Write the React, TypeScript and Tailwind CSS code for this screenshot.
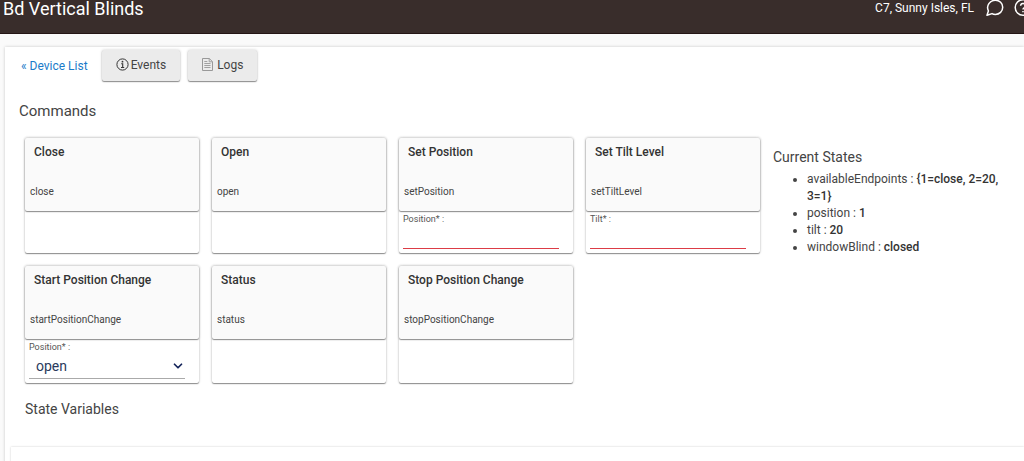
import React from 'react';
import { ChevronDown } from 'lucide-react';

type Field = { label: string; kind: 'number' | 'select'; options?: string[] };
type Command = { name: string; title: string; field?: Field };

const commands: Command[] = [
  { name: 'close', title: 'Close' },
  { name: 'open', title: 'Open' },
  { name: 'setPosition', title: 'Set Position', field: { label: 'Position* :', kind: 'number' } },
  { name: 'setTiltLevel', title: 'Set Tilt Level', field: { label: 'Tilt* :', kind: 'number' } },
  {
    name: 'startPositionChange',
    title: 'Start Position Change',
    field: { label: 'Position* :', kind: 'select', options: ['open', 'close'] },
  },
  { name: 'status', title: 'Status' },
  { name: 'stopPositionChange', title: 'Stop Position Change' },
];

const states = [
  { name: 'availableEndpoints', value: '{1=close, 2=20, 3=1}' },
  { name: 'position', value: '1' },
  { name: 'tilt', value: '20' },
  { name: 'windowBlind', value: 'closed' },
];

const raised = 'rounded-[2px] shadow-[0_1px_1px_rgba(0,0,0,0.4),0_0_3px_rgba(0,0,0,0.2)]';

function InfoIcon() {
  return (
    <svg className="size-[13px]" viewBox="0 0 13 13" fill="none" aria-hidden="true">
      <circle cx="6.5" cy="6.5" r="5.6" stroke="#333" strokeWidth="1" />
      <circle cx="6.5" cy="3.7" r="0.9" fill="#333" />
      <path d="M5.2 5.7h1.5v3.8M5 9.5h3.2" stroke="#333" strokeWidth="1.1" />
    </svg>
  );
}

function LogIcon() {
  return (
    <svg className="h-[13px] w-[11px]" viewBox="0 0 11 13" fill="none" stroke="#999" aria-hidden="true">
      <path d="M.5.5h6.8l3.2 3.2v8.8H.5z" />
      <path d="M7.2.5v3.3h3.3M2.3 3.5h3M2.3 5.5h6.2M2.3 7.5h6.2M2.3 9.5h6.2" strokeWidth="0.9" />
    </svg>
  );
}

function CommandField({ id, field }: { id: string; field: Field }) {
  return (
    <div className="pl-1 pr-3.5">
      <label htmlFor={id} className="block pt-0.5 text-[9px] leading-3 text-[#555]">
        {field.label}
      </label>
      {field.kind === 'number' ? (
        <input
          id={id}
          type="number"
          className="block h-6 w-full border-0 border-b border-solid border-b-[#dc3c46] bg-transparent px-2 text-sm outline-none"
        />
      ) : (
        <div className="relative">
          <select
            id={id}
            className="block h-[26px] w-full appearance-none border-b border-[#aaa] bg-transparent px-[7px] text-sm text-[#2a3a5c] outline-none"
          >
            {field.options?.map((option) => (
              <option key={option}>{option}</option>
            ))}
          </select>
          <ChevronDown
            className="pointer-events-none absolute right-0 top-1.5 size-3.5 text-[#14245a]"
            strokeWidth={3}
          />
        </div>
      )}
    </div>
  );
}

function CommandCard({ command }: { command: Command }) {
  return (
    <div className={`bg-white ${raised}`}>
      <button
        type="button"
        className={`flex h-[73px] w-full flex-col items-start bg-[#fafafa] px-1 pt-1.5 text-left ${raised}`}
      >
        <span className="px-[5px] text-xs font-medium leading-4 text-[#333]">{command.title}</span>
        <span className="mt-6 px-px text-[10px] leading-4 text-[#444]">{command.name}</span>
      </button>
      <div className="min-h-[42px] pb-1">
        {command.field && <CommandField id={`cmd-${command.name}`} field={command.field} />}
      </div>
    </div>
  );
}

export default function App() {
  return (
    <div className="min-h-screen overflow-hidden bg-[#fafafa] font-[Roboto,sans-serif] text-[#444]">
      <header className="flex h-[34px] items-start justify-between overflow-hidden border-b border-[#241515] bg-[#392d2b] pl-[3px] text-white">
        <h1 className="text-lg leading-[18px]">Bd Vertical Blinds</h1>
        <div className="flex items-start">
          <span className="text-xs leading-4">C7, Sunny Isles, FL</span>
          <a href="#chat" aria-label="Chat" className="ml-3">
            <svg className="size-[18px]" viewBox="0 0 18 18" fill="none" stroke="currentColor" strokeWidth="1.5" aria-hidden="true">
              <path d="M1 15.3l1.4-4.4C-.2 5.6 4 .3 9.4.3c4.2 0 7.3 3.1 7.3 6.9 0 4.2-3.2 7.2-7.3 7.2-1.3 0-2.4-.2-3.4-.8z" strokeLinejoin="round" />
            </svg>
          </a>
          <a href="#help" aria-label="Help" className="-mr-2 ml-2.5">
            <svg className="size-[18px]" viewBox="0 0 18 18" fill="none" stroke="currentColor" strokeWidth="1.5" aria-hidden="true">
              <circle cx="9" cy="7.5" r="7.8" />
              <path d="M6.6 5.8a2.4 2.4 0 1 1 3.4 2.2c-.7.4-1 .8-1 1.5M9 11v1.3" />
            </svg>
          </a>
        </div>
      </header>

      <main className="ml-[5px] mt-[13px] min-h-[414px] bg-white pl-5 pt-[3px] shadow-[0_0_3px_rgba(0,0,0,0.2)]">
        <nav className="-ml-1 flex items-center">
          <a href="#devices" className="mr-3.5 pt-px text-xs text-[#1a7bc9]">
            « Device List
          </a>
          <button type="button" className={`mr-2 flex h-[31px] items-center gap-0.5 bg-[#ebebeb] px-3.5 pb-0.5 text-xs ${raised}`}>
            <InfoIcon />
            Events
          </button>
          <button type="button" className={`flex h-[31px] items-center gap-1 bg-[#ebebeb] px-3.5 pb-0.5 text-xs ${raised}`}>
            <LogIcon />
            Logs
          </button>
        </nav>

        <h2 className="-ml-1.5 mt-5 text-[15px] leading-5">Commands</h2>

        <div className="mt-[17px] flex gap-[13px]">
          <section className="grid flex-1 grid-cols-4 gap-[13px]">
            {commands.map((command) => (
              <CommandCard key={command.name} command={command} />
            ))}
          </section>

          <aside className="w-[251px] pr-5 pt-[11px]">
            <h3 className="text-sm leading-4">Current States</h3>
            <ul className="mt-1.5 list-disc pl-[34px] text-xs leading-[17px]">
              {states.map((state) => (
                <li key={state.name}>
                  {state.name} : <span className="font-medium text-[#333]">{state.value}</span>
                </li>
              ))}
            </ul>
          </aside>
        </div>

        <h3 className="mt-4 text-sm leading-5">State Variables</h3>
        <div className="-ml-3.5 mt-7 h-8 bg-white shadow-[0_0_2px_rgba(0,0,0,0.2)]" />
      </main>
    </div>
  );
}
